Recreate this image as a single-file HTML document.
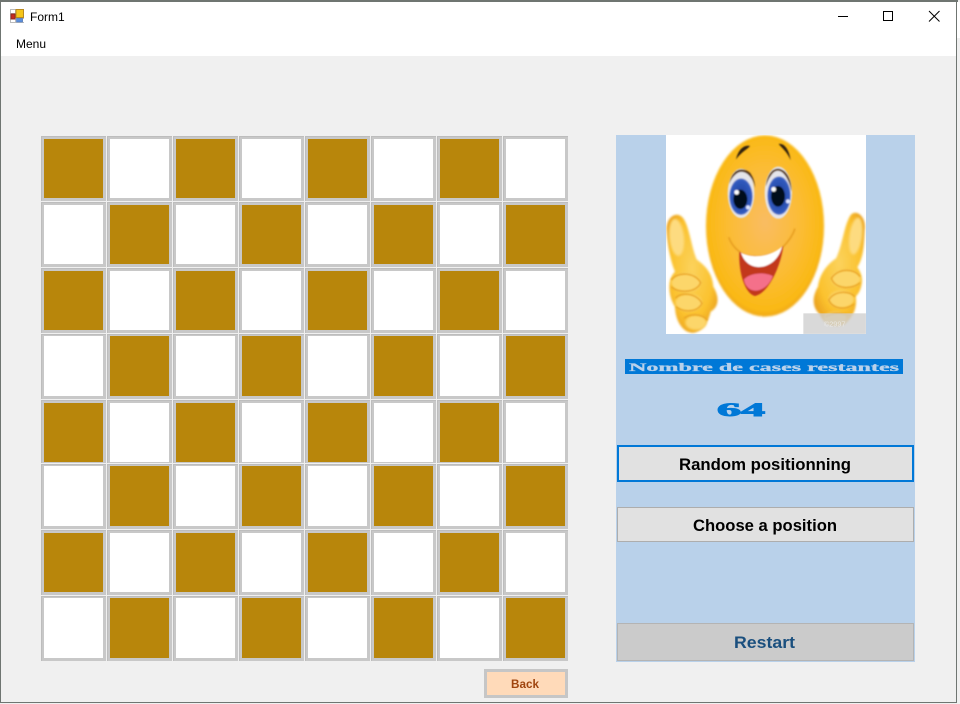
<!DOCTYPE html>
<html>
<head>
<meta charset="utf-8">
<title>Form1</title>
<style>
html,body{margin:0;padding:0;width:960px;height:704px;overflow:hidden;background:#f0f0f0;font-family:"Liberation Sans",sans-serif;}
.a{position:absolute;box-sizing:border-box;}
.cell{position:absolute;background:#c8c8c8;border-top:1px solid #bdbdbd;border-left:1px solid #bdbdbd;box-sizing:border-box;}
.in{position:absolute;}
</style>
</head>
<body>
<div class="a" style="left:957px;top:0;width:3px;height:704px;background:#f0f0f0"></div>
<div class="a" style="left:957px;top:2px;width:3px;height:36px;background:#fff"></div>
<div class="a" style="left:0;top:0;width:957px;height:703px;background:#f0f0f0"></div>
<div class="a" style="left:1px;top:2px;width:956px;height:54px;background:#fff"></div>
<div class="a" style="left:0;top:0;width:958px;height:2px;background:#6f7571"></div>
<div class="a" style="left:0;top:0;width:1px;height:703px;background:#6f7571"></div>
<div class="a" style="left:956px;top:0;width:1px;height:703px;background:#6f7571"></div>
<div class="a" style="left:0;top:702px;width:957px;height:1px;background:#6f7571"></div>

<!-- app icon -->
<svg class="a" style="left:10px;top:9px" width="14" height="14" viewBox="0 0 14 14">
<rect x="0" y="0" width="14" height="14" fill="#fff"/>
<path d="M0 .5H6M0 4.5H6M0 9.5H14M0 13.5H14M.5 0V14M5.5 0V14M12.5 9V14" stroke="#bbb" stroke-width="1" fill="none"/>
<rect x="6" y="0.5" width="7.5" height="8" fill="#f5c518" stroke="#b98a20"/>
<rect x="1" y="5" width="4" height="5" fill="#c8281e" stroke="#8e2a20"/>
<rect x="6.5" y="9.5" width="6" height="3.5" fill="#5b8fdc" stroke="#4a74b8" stroke-width=".6"/>
</svg>
<div class="a" style="left:30px;top:10px;font-size:12px;line-height:14px;color:#000">Form1</div>
<div class="a" style="left:16px;top:37px;font-size:12px;line-height:14px;color:#000">Menu</div>

<!-- window controls -->
<svg class="a" style="left:830px;top:5px" width="120" height="22" viewBox="830 5 120 22">
<path d="M838 16.5H848" stroke="#000" stroke-width="1"/>
<rect x="883.5" y="11.5" width="9" height="9" fill="none" stroke="#000" stroke-width="1"/>
<path d="M929 11L939.5 21.5M939.5 11L929 21.5" stroke="#000" stroke-width="1" fill="none"/>
</svg>

<div id="grid"></div>
<script>
var cx=[41,107,173,239,305,371,437,503];
var rt=[136,202,268,334,400,464,530,596];
var it=[139,205,271,336,403,466,533,598];
var ib=[198,264,330,396,462,526,592,658];
var ob=[201,267,333,399,463,529,595,661];
var h='';
for(var r=0;r<8;r++){for(var c=0;c<8;c++){
 var col=((r+c)%2==0)?'#b8860b':'#ffffff';
 h+='<div class="cell" style="left:'+cx[c]+'px;top:'+rt[r]+'px;width:65px;height:'+(ob[r]-rt[r])+'px"></div>';
 h+='<div class="in" style="left:'+(cx[c]+3)+'px;top:'+it[r]+'px;width:59px;height:'+(ib[r]-it[r])+'px;background:'+col+'"></div>';
}}
document.getElementById('grid').innerHTML=h;
</script>

<!-- side panel -->
<div class="a" style="left:616px;top:135px;width:299px;height:527px;background:#b9d1ea"></div>

<!-- emoji image -->
<svg class="a" style="left:666px;top:135px" width="200" height="199" viewBox="18 15 600 597">
<defs>
<filter id="b" x="-20%" y="-20%" width="140%" height="140%"><feGaussianBlur stdDeviation="3"/></filter>
<filter id="b2" x="-30%" y="-30%" width="160%" height="160%"><feGaussianBlur stdDeviation="2"/></filter>
<filter id="b3" x="-30%" y="-30%" width="160%" height="160%"><feGaussianBlur stdDeviation="4"/></filter>
<radialGradient id="face" cx="50%" cy="48%" r="55%">
<stop offset="0" stop-color="#f9bc62"/><stop offset=".55" stop-color="#fbbc35"/><stop offset=".88" stop-color="#fab915"/><stop offset="1" stop-color="#e89a18"/>
</radialGradient>
<radialGradient id="hand" cx="50%" cy="45%" r="60%">
<stop offset="0" stop-color="#fcd25c"/><stop offset=".7" stop-color="#fbc22e"/><stop offset="1" stop-color="#eba21f"/>
</radialGradient>
<radialGradient id="iris" cx="50%" cy="50%" r="55%">
<stop offset="0" stop-color="#1f3f9a"/><stop offset=".8" stop-color="#3059bd"/><stop offset="1" stop-color="#7f98d8"/>
</radialGradient>
</defs>
<rect x="18" y="15" width="600" height="597" fill="#fff"/>
<g filter="url(#b)">
<ellipse cx="315" cy="288" rx="177" ry="272" fill="url(#face)"/>
<!-- left hand -->
<path d="M20 300C18 262 50 240 70 265C88 290 94 350 110 388C132 405 157 425 160 470C178 500 178 530 152 545C142 590 115 612 92 608C60 602 45 560 45 530C25 500 20 450 45 425C30 390 22 340 20 300Z" fill="url(#hand)"/>
<!-- right hand -->
<path d="M614 300C620 262 590 235 572 255C552 285 548 345 528 385C505 400 478 430 474 470C456 500 456 530 478 552C495 588 525 592 552 584C582 560 592 530 587 500C607 480 614 440 592 412C612 380 612 340 614 300Z" fill="url(#hand)"/>
</g>
<g filter="url(#b3)">
<ellipse cx="78" cy="458" rx="44" ry="28" fill="#fcd66a"/>
<ellipse cx="86" cy="518" rx="40" ry="26" fill="#fcd66a"/>
<ellipse cx="108" cy="578" rx="32" ry="22" fill="#fcd66a"/>
<ellipse cx="558" cy="447" rx="44" ry="27" fill="#fcd66a"/>
<ellipse cx="544" cy="508" rx="38" ry="26" fill="#fcd66a"/>
<ellipse cx="525" cy="565" rx="34" ry="20" fill="#f2c860"/>
<ellipse cx="50" cy="322" rx="22" ry="56" fill="#fddb80" transform="rotate(-6 50 322)"/>
<ellipse cx="587" cy="318" rx="19" ry="56" fill="#fddb80" transform="rotate(8 587 318)"/>
</g>
<g fill="none" stroke="#e9a325" stroke-width="4" filter="url(#b2)">
<path d="M34 450C50 425 105 425 122 458C110 490 50 490 34 470"/>
<path d="M46 505C60 485 110 488 126 520C112 548 70 548 48 530"/>
<path d="M72 565C90 550 125 550 142 570"/>
<path d="M600 440C585 415 535 412 514 445C525 478 575 480 600 458"/>
<path d="M584 500C570 482 525 480 506 510C520 540 560 540 582 522"/>
<path d="M498 560C515 548 545 548 570 556"/>
</g>
<g filter="url(#b2)">
<!-- brows -->
<path d="M228 88C235 60 250 44 270 48C262 58 244 66 228 88Z" fill="#33210f"/>
<path d="M392 90C388 62 374 38 356 42C366 54 380 64 392 90Z" fill="#33210f"/>
<!-- eyes -->
<ellipse cx="243" cy="190" rx="40" ry="74" fill="#e4e4ea"/>
<ellipse cx="355" cy="188" rx="41" ry="78" fill="#e4e4ea"/>
<path d="M208 165C212 125 240 105 270 128C282 145 285 160 285 175C280 140 250 110 225 135C215 145 210 155 208 165Z" fill="#5a3a18"/>
<path d="M318 170C320 130 345 100 375 125C390 140 395 165 394 185C388 145 362 105 338 130C328 142 322 155 318 170Z" fill="#5a3a18"/>
<ellipse cx="243" cy="200" rx="35" ry="55" fill="url(#iris)"/>
<ellipse cx="357" cy="197" rx="35" ry="58" fill="url(#iris)"/>
<ellipse cx="241" cy="208" rx="21" ry="29" fill="#06081e"/>
<ellipse cx="354" cy="199" rx="21" ry="31" fill="#06081e"/>
<circle cx="230" cy="187" r="7" fill="#fff"/>
<circle cx="341" cy="178" r="7" fill="#fff"/>
<circle cx="264" cy="232" r="6" fill="#dfe6ff"/>
<circle cx="384" cy="214" r="6" fill="#dfe6ff"/>
<!-- smile corners -->
<path d="M206 322C215 345 228 358 240 366" fill="none" stroke="#e8a020" stroke-width="5"/>
<path d="M368 352C385 335 398 318 405 296" fill="none" stroke="#e8a020" stroke-width="5"/>
<!-- mouth -->
<path d="M238 365C280 388 335 378 370 348C362 410 325 490 285 498C252 490 235 420 238 365Z" fill="#c2391b"/>
<path d="M243 368C280 388 335 378 366 350C358 385 330 412 295 411C268 410 250 392 243 368Z" fill="#fff"/>
<path d="M252 448C275 425 318 428 338 438C332 460 310 482 285 482C265 480 254 465 252 448Z" fill="#f4708a"/>
</g>
<rect x="430" y="550" width="188" height="62" fill="#cfcfcf" opacity=".8"/>
<text x="524" y="590" font-family="'Liberation Sans',sans-serif" font-size="22" fill="#eee" text-anchor="middle" opacity=".8">©2997</text>
</svg>

<!-- label -->
<div class="a" style="left:625px;top:359px;width:278px;height:15px;background:#0078d7"></div>
<svg class="a" style="left:616px;top:355px" width="299" height="70" viewBox="616 355 299 70">
<text x="629" y="371" font-family="'Liberation Serif',serif" font-weight="700" font-size="12" fill="#b9d1ea" stroke="#b9d1ea" stroke-width=".3" textLength="270" lengthAdjust="spacingAndGlyphs">Nombre de cases restantes</text>
<text x="717" y="416" font-family="'Liberation Serif',serif" font-weight="700" font-size="19" fill="#0078d7" stroke="#0078d7" stroke-width=".9" textLength="48" lengthAdjust="spacingAndGlyphs">64</text>
</svg>

<!-- buttons -->
<div class="a" style="left:617px;top:445px;width:297px;height:37px;background:#e1e1e1;border:2px solid #0078d7"></div>
<div class="a" style="left:617px;top:507px;width:297px;height:35px;background:#e1e1e1;border:1px solid #adadad"></div>
<div class="a" style="left:617px;top:623px;width:297px;height:38px;background:#cbcbcb;border:1px solid #b4b4b4"></div>
<div class="a" style="left:484px;top:669px;width:84px;height:29px;background:#ffdab9;border:3px solid #c6c6c6"></div>
<svg class="a" style="left:480px;top:440px" width="440" height="264" viewBox="480 440 440 264">
<text x="679" y="470" font-family="'Liberation Sans',sans-serif" font-weight="700" font-size="16.5" fill="#000" textLength="172" lengthAdjust="spacingAndGlyphs">Random positionning</text>
<text x="693" y="531" font-family="'Liberation Sans',sans-serif" font-weight="700" font-size="16.5" fill="#000" textLength="144" lengthAdjust="spacingAndGlyphs">Choose a position</text>
<text x="734" y="648" font-family="'Liberation Sans',sans-serif" font-weight="700" font-size="16.5" fill="#1a4f7e" textLength="61" lengthAdjust="spacingAndGlyphs">Restart</text>
<text x="511" y="688" font-family="'Liberation Sans',sans-serif" font-weight="700" font-size="11.5" fill="#a0450f" textLength="28" lengthAdjust="spacingAndGlyphs">Back</text>
</svg>
</body>
</html>
